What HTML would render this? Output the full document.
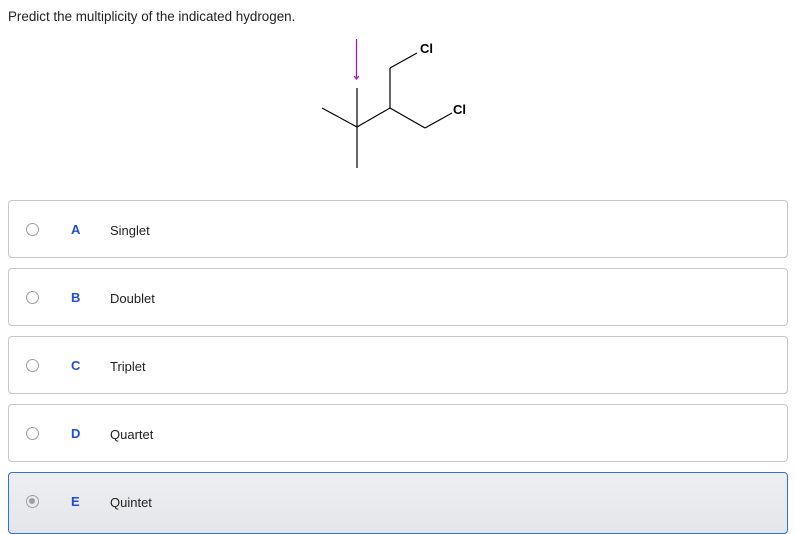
<!DOCTYPE html>
<html><head><meta charset="utf-8"><style>
body{margin:0;width:796px;height:526px;overflow:hidden;background:#fff;font-family:"Liberation Sans",sans-serif;color:#222;position:relative}
.q{position:absolute;left:8px;top:9px;font-size:13.4px;color:#222}
.opt{position:absolute;left:8px;width:780px;height:58px;border:1px solid #c4c7cc;border-radius:4px;box-sizing:border-box;background:#fff}
.opt .r{position:absolute;left:17px;top:22px;width:13px;height:13px;border:1.5px solid #9aa0a8;border-radius:50%;box-sizing:border-box}
.opt .l{position:absolute;left:62px;top:21px;font-size:13px;font-weight:bold;color:#1f4fd6}
.opt .t{position:absolute;left:101px;top:22px;font-size:13px;color:#222}
.sel{background:linear-gradient(#edeef0,#e4e6e9);border:1px solid #2f6fe0;height:62px}
.sel .r::after{content:"";position:absolute;left:2px;top:2px;width:6px;height:6px;border-radius:50%;background:#9aa0a8}
</style></head><body>
<div class="q">Predict the multiplicity of the indicated hydrogen.</div>
<svg width="796" height="200" style="position:absolute;left:0;top:0" >
<g stroke="#000" stroke-width="1.2" fill="none">
<line x1="357" y1="88" x2="357" y2="168"/>
<line x1="322" y1="108" x2="357" y2="127"/>
<line x1="357" y1="127" x2="390" y2="108"/>
<line x1="390" y1="108" x2="390" y2="68"/>
<line x1="390" y1="68" x2="417" y2="53"/>
<line x1="390" y1="108" x2="425" y2="128"/>
<line x1="425" y1="128" x2="452" y2="113"/>
</g>
<g stroke="#c000c0" stroke-width="1.2" fill="none">
<line x1="356.5" y1="39" x2="356.5" y2="79"/>
<polyline points="354,76 356.5,79 359,76"/>
</g>
<text x="420" y="53" font-size="13" font-weight="bold" font-family="Liberation Sans,sans-serif">Cl</text>
<text x="453" y="114" font-size="13" font-weight="bold" font-family="Liberation Sans,sans-serif">Cl</text>
</svg>
<div class="opt" style="top:200px"><div class="r"></div><div class="l">A</div><div class="t">Singlet</div></div>
<div class="opt" style="top:268px"><div class="r"></div><div class="l">B</div><div class="t">Doublet</div></div>
<div class="opt" style="top:336px"><div class="r"></div><div class="l">C</div><div class="t">Triplet</div></div>
<div class="opt" style="top:404px"><div class="r"></div><div class="l">D</div><div class="t">Quartet</div></div>
<div class="opt sel" style="top:472px"><div class="r"></div><div class="l">E</div><div class="t">Quintet</div></div>
</body></html>
